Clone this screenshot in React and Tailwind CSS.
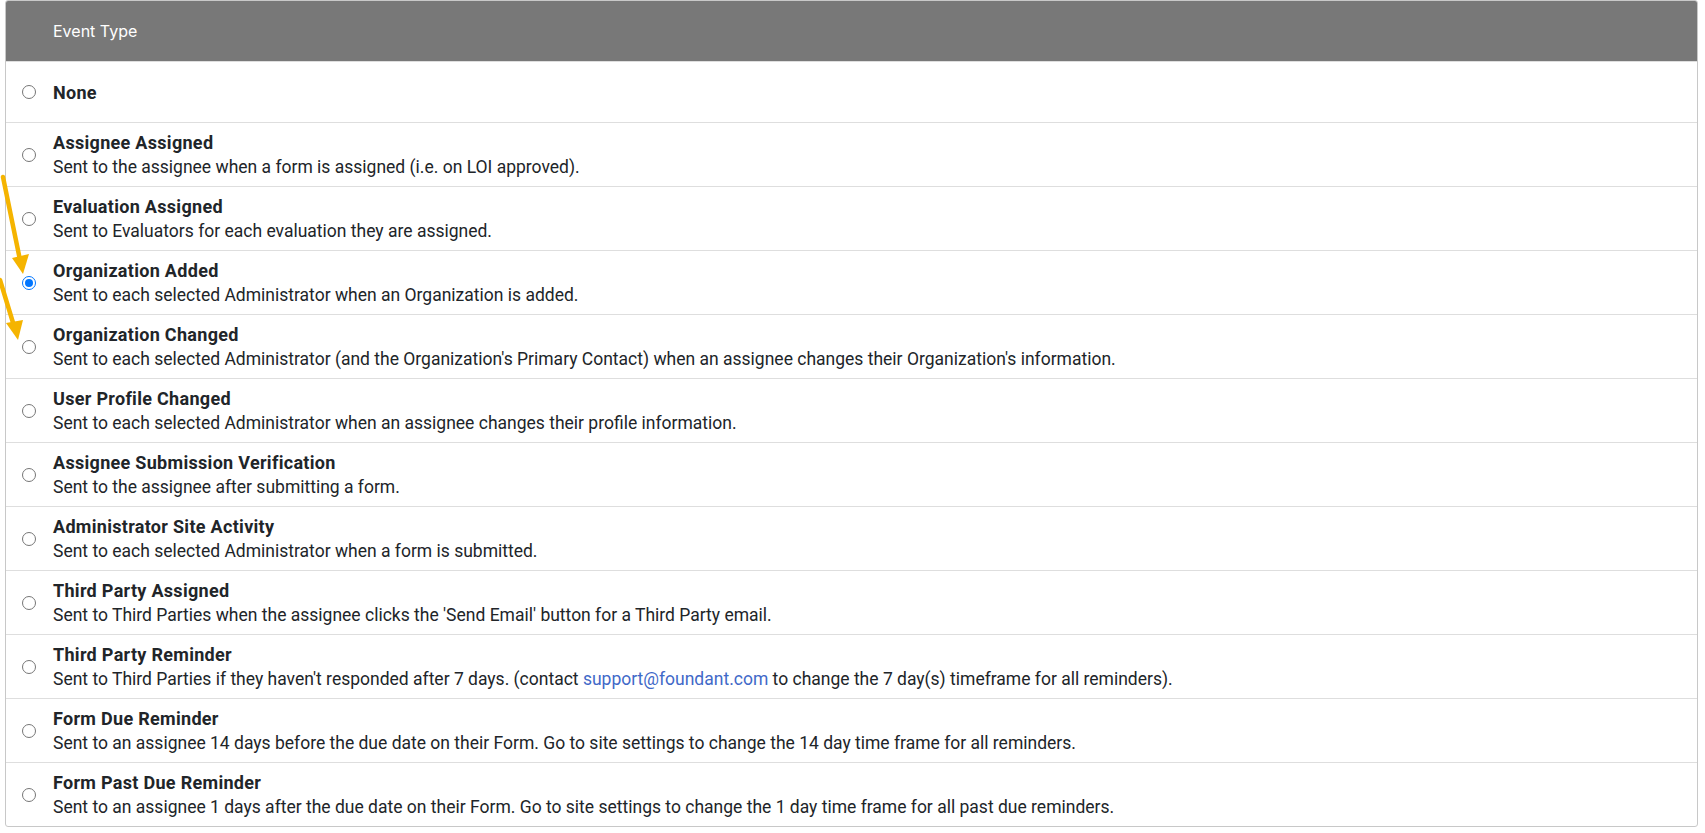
const rows = [
  ["None", null],
  ["Assignee Assigned", "Sent to the assignee when a form is assigned (i.e. on LOI approved)."],
  ["Evaluation Assigned", "Sent to Evaluators for each evaluation they are assigned."],
  ["Organization Added", "Sent to each selected Administrator when an Organization is added."],
  ["Organization Changed", "Sent to each selected Administrator (and the Organization's Primary Contact) when an assignee changes their Organization's information."],
  ["User Profile Changed", "Sent to each selected Administrator when an assignee changes their profile information."],
  ["Assignee Submission Verification", "Sent to the assignee after submitting a form."],
  ["Administrator Site Activity", "Sent to each selected Administrator when a form is submitted."],
  ["Third Party Assigned", "Sent to Third Parties when the assignee clicks the 'Send Email' button for a Third Party email."],
  ["Third Party Reminder", "LINK"],
  ["Form Due Reminder", "Sent to an assignee 14 days before the due date on their Form. Go to site settings to change the 14 day time frame for all reminders."],
  ["Form Past Due Reminder", "Sent to an assignee 1 days after the due date on their Form. Go to site settings to change the 1 day time frame for all past due reminders."],
];

function Radio({ checked }) {
  return checked ? (
    <span className="w-[14px] h-[14px] rounded-full border border-[#0075ff] bg-white flex items-center justify-center">
      <span className="w-[8px] h-[8px] rounded-full bg-[#0075ff]" />
    </span>
  ) : (
    <span className="w-[14px] h-[14px] rounded-full border border-[#767676] bg-white" />
  );
}

export default function App() {
  return (
    <div className="relative w-[1705px] h-[833px] bg-white" style={{ fontFamily: "Roboto, 'Liberation Sans', sans-serif" }}>
      <div className="ml-[5px] w-[1693px] border border-[#c8c8c8] rounded-[3px] overflow-hidden">
        <div className="h-[60px] bg-[#787878] flex items-center pl-[47px] text-white text-[16px]" style={{ fontFamily: "Inter, 'Open Sans', sans-serif" }}>
          Event Type
        </div>
        {rows.map(([t, d], i) => (
          <div key={t} className={`flex items-center border-t border-[#dedede] ${i === 0 ? "h-[61px]" : "h-[64px]"}`}>
            <div className="w-[47px] flex justify-center pr-[1px]"><Radio checked={i === 3} /></div>
            <div className="text-[17.5px] leading-[25px] text-[#212529]">
              <div className="font-bold text-[18px] tracking-[0.3px]">{t}</div>
              {d === "LINK" ? (
                <div>Sent to Third Parties if they haven't responded after 7 days. (contact <span className="text-[#4169c8]">support@foundant.com</span> to change the 7 day(s) timeframe for all reminders).</div>
              ) : d ? <div>{d}</div> : null}
            </div>
          </div>
        ))}
      </div>
      <svg className="absolute left-0 top-0 pointer-events-none" width="70" height="370">
        <line x1="3" y1="177" x2="20" y2="260" stroke="#f5b400" strokeWidth="4.5" strokeLinecap="round" />
        <polygon points="12,258 29,254 23,274" fill="#f5b400" />
        <line x1="0" y1="280" x2="14" y2="326" stroke="#f5b400" strokeWidth="4.5" strokeLinecap="round" />
        <polygon points="6,323 23,320 18,340" fill="#f5b400" />
      </svg>
    </div>
  );
}
